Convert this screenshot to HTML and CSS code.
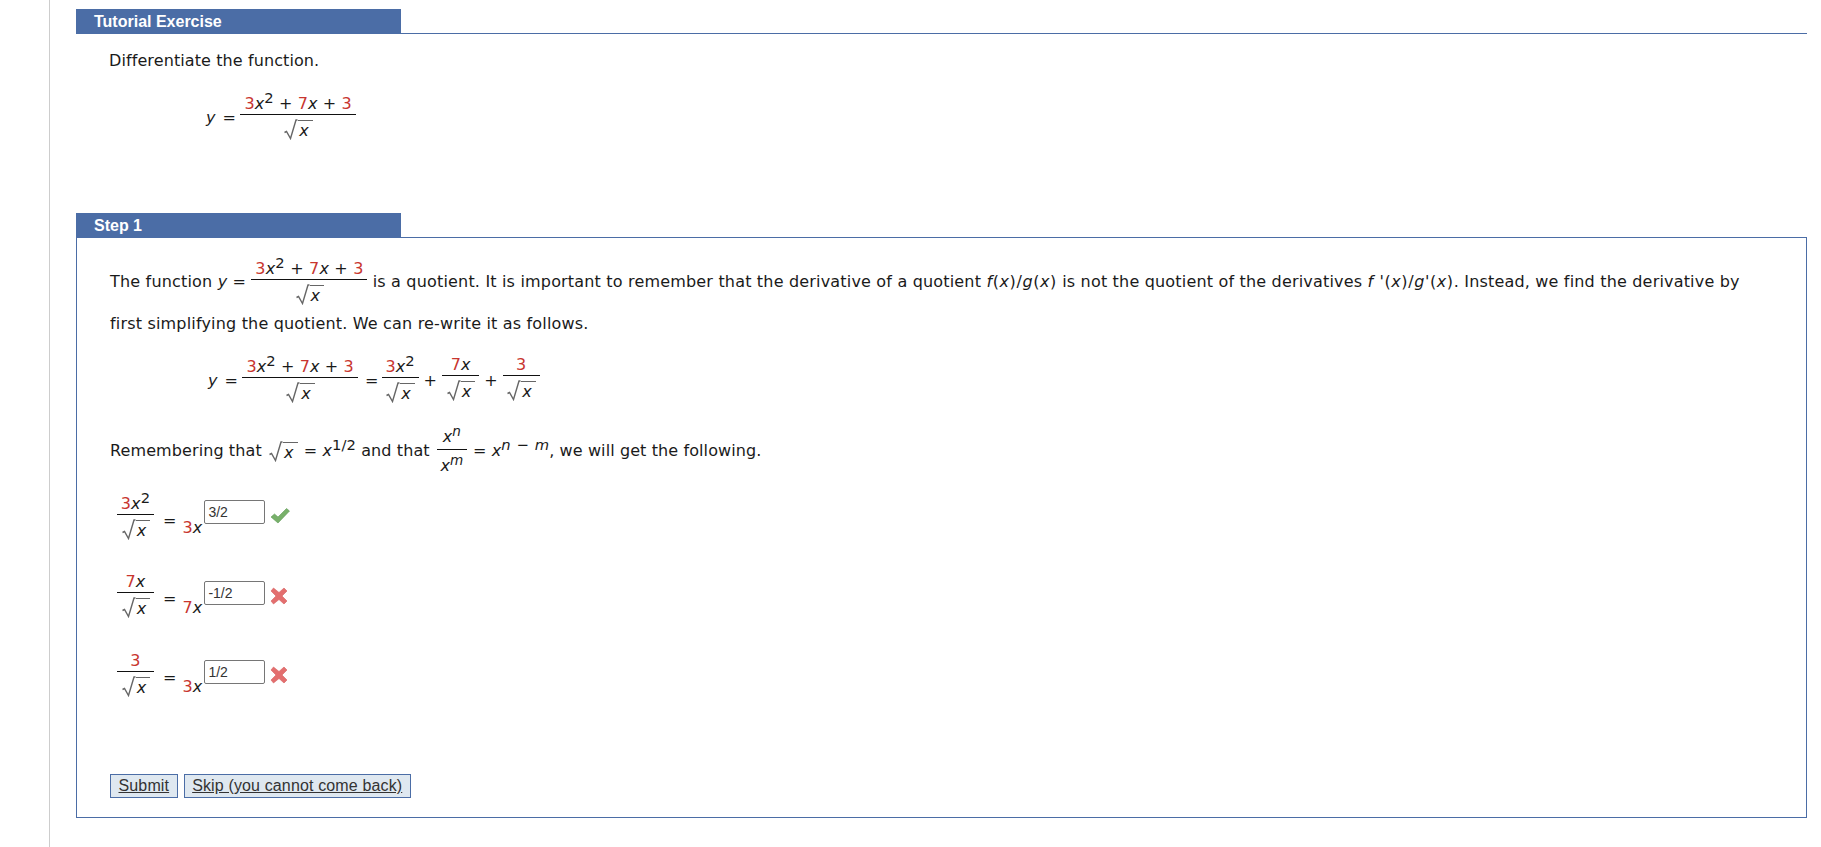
FILE: index.html
```html
<!DOCTYPE html>
<html lang="en">
<head>
<meta charset="utf-8">
<title>Tutorial Exercise</title>
<link rel="stylesheet" href="styles.css">
</head>
<body>
<div class="rail"></div>
<main class="main">
  <section class="intro">
    <div class="sec-head"><h2 class="sec-tab">Tutorial Exercise</h2></div>
    <p class="lead">Differentiate the function.</p>
    <div class="eq eq-intro">
      <i>y</i><span class="op lead-op">=</span>
      <span class="frac wide"><span class="num"><b>3</b><i>x</i><sup>2</sup> + <b>7</b><i>x</i> + <b>3</b></span><span class="den"><span class="sqrt"><svg class="rad" viewBox="0 0 14 21"><path d="M1 13.5 L3 12.5 L7 19.5 L12.5 1 H14"/></svg><i class="rx">x</i></span></span></span>
    </div>
  </section>
  <section class="step">
    <div class="sec-head"><h2 class="sec-tab">Step 1</h2></div>
    <div class="panel">
      <p class="para p1">The function <i>y</i> = <span class="frac wide"><span class="num"><b>3</b><i>x</i><sup>2</sup> + <b>7</b><i>x</i> + <b>3</b></span><span class="den"><span class="sqrt"><svg class="rad" viewBox="0 0 14 21"><path d="M1 13.5 L3 12.5 L7 19.5 L12.5 1 H14"/></svg><i class="rx">x</i></span></span></span> is a quotient. It is important to remember that the derivative of a quotient <span class="fn"><i>f</i>(<i>x</i>)/<i>g</i>(<i>x</i>)</span> is not the quotient of the derivatives <span class="fn"><i>f</i> '(<i>x</i>)/<i>g</i>'(<i>x</i>)</span>. Instead, we find the derivative by<span class="ln2">first simplifying the quotient. We can re-write it as follows.</span></p>
      <div class="eq eq-split">
        <i>y</i><span class="op lead-op">=</span>
        <span class="frac wide"><span class="num"><b>3</b><i>x</i><sup>2</sup> + <b>7</b><i>x</i> + <b>3</b></span><span class="den"><span class="sqrt"><svg class="rad" viewBox="0 0 14 21"><path d="M1 13.5 L3 12.5 L7 19.5 L12.5 1 H14"/></svg><i class="rx">x</i></span></span></span>
        <span class="op lead-op">=</span>
        <span class="frac small"><span class="num"><b>3</b><i>x</i><sup>2</sup></span><span class="den"><span class="sqrt"><svg class="rad" viewBox="0 0 14 21"><path d="M1 13.5 L3 12.5 L7 19.5 L12.5 1 H14"/></svg><i class="rx">x</i></span></span></span>
        <span class="op">+</span>
        <span class="frac small raised"><span class="num"><b>7</b><i>x</i></span><span class="den"><span class="sqrt"><svg class="rad" viewBox="0 0 14 21"><path d="M1 13.5 L3 12.5 L7 19.5 L12.5 1 H14"/></svg><i class="rx">x</i></span></span></span>
        <span class="op">+</span>
        <span class="frac small raised"><span class="num"><b>3</b></span><span class="den"><span class="sqrt"><svg class="rad" viewBox="0 0 14 21"><path d="M1 13.5 L3 12.5 L7 19.5 L12.5 1 H14"/></svg><i class="rx">x</i></span></span></span>
      </div>
      <p class="para p3">Remembering that <span class="sqrt"><svg class="rad" viewBox="0 0 14 21"><path d="M1 13.5 L3 12.5 L7 19.5 L12.5 1 H14"/></svg><i class="rx">x</i></span> = <i>x</i><sup>1/2</sup> and that <span class="frac pow"><span class="num"><i>x<sup>n</sup></i></span><span class="den"><i>x<sup>m</sup></i></span></span> = <i>x</i><sup class="nm"><i>n</i> &minus; <i>m</i></sup>, we will get the following.</p>
      <div class="row r1">
        <span class="frac small"><span class="num"><b>3</b><i>x</i><sup>2</sup></span><span class="den"><span class="sqrt"><svg class="rad" viewBox="0 0 14 21"><path d="M1 13.5 L3 12.5 L7 19.5 L12.5 1 H14"/></svg><i class="rx">x</i></span></span></span>
        <span class="eqs">=</span>
        <span class="base"><b>3</b><i>x</i></span>
        <input class="ans" type="text" value="3/2">
        <svg class="mark" viewBox="0 0 20 18"><path class="ok" d="M1 10 L4.5 7 L8 10 L16.5 1.5 L19.5 4 L8 16 Z"/></svg>
      </div>
      <div class="row r2">
        <span class="frac small"><span class="num"><b>7</b><i>x</i></span><span class="den"><span class="sqrt"><svg class="rad" viewBox="0 0 14 21"><path d="M1 13.5 L3 12.5 L7 19.5 L12.5 1 H14"/></svg><i class="rx">x</i></span></span></span>
        <span class="eqs">=</span>
        <span class="base"><b>7</b><i>x</i></span>
        <input class="ans" type="text" value="-1/2">
        <svg class="mark" viewBox="0 0 20 18"><path class="no" d="M3.5 1 L9 5.5 L14 1 L17 4 L12 9 L17 14 L14 17 L9 12.5 L3.5 17 L1 14 L6 9 L1 4 Z"/></svg>
      </div>
      <div class="row r3">
        <span class="frac small"><span class="num"><b>3</b></span><span class="den"><span class="sqrt"><svg class="rad" viewBox="0 0 14 21"><path d="M1 13.5 L3 12.5 L7 19.5 L12.5 1 H14"/></svg><i class="rx">x</i></span></span></span>
        <span class="eqs">=</span>
        <span class="base"><b>3</b><i>x</i></span>
        <input class="ans" type="text" value="1/2">
        <svg class="mark" viewBox="0 0 20 18"><path class="no" d="M3.5 1 L9 5.5 L14 1 L17 4 L12 9 L17 14 L14 17 L9 12.5 L3.5 17 L1 14 L6 9 L1 4 Z"/></svg>
      </div>
      <div class="actions">
        <button class="btn" type="button">Submit</button>
        <button class="btn" type="button">Skip (you cannot come back)</button>
      </div>
    </div>
  </section>
</main>
</body>
</html>
```
FILE: styles.css
```css
* { box-sizing: border-box; }
html, body { margin: 0; height: 100%; background: #fff; }
body {
  display: flex;
  font-family: "DejaVu Sans", Verdana, sans-serif;
  font-size: 16px;
  letter-spacing: .1px;
  color: #1a1a1a;
  overflow: hidden;
}
.rail { width: 50px; flex: none; border-right: 1px solid #cdcdcd; }
.main { flex: none; width: 1731px; margin-left: 26px; padding-top: 9px; }
.sec-head { border-bottom: 1px solid #4b6da6; height: 25px; }
.sec-tab {
  margin: 0;
  width: 325px;
  height: 25px;
  padding-left: 18px;
  background: #4b6da6;
  color: #fff;
  letter-spacing: 0;
  font: bold 16px/26px "Liberation Sans", Arial, sans-serif;
}
.intro { height: 204px; }
.lead { margin: 0; padding: 17px 0 0 33px; line-height: 20px; }
.eq { display: flex; align-items: center; }
.eq-intro { padding: 23px 0 0 130px; }
.op { margin: 0 6px; }
.op.lead-op { margin: 0 4px 0 7px; }
i { font-style: italic; }
b { font-weight: normal; color: #c8352f; }
sup { font-size: .92em; line-height: 0; vertical-align: 6.5px; }
.nm { word-spacing: 1px; }

.frac { display: inline-flex; flex-direction: column; align-items: center; vertical-align: middle; }
.num { line-height: 20px; padding: 0 3px; white-space: nowrap; }
.den { border-top: 1px solid #111; width: 100%; display: flex; justify-content: center; line-height: 20px; padding-top: 4px; }
.frac.wide { width: 116px; }
.frac.small { width: 37px; }
.frac.pow { width: 30px; margin: 0 1px 0 2px; }
.frac.pow .num { padding-bottom: 2px; }
.frac.pow .den { padding-top: 6px; }
.frac.pow sup { font-size: .85em; }
.sqrt { display: inline-flex; align-items: flex-start; vertical-align: middle; height: 21px; }
.rad { width: 15px; height: 21px; flex: none; }
.rad path { fill: none; stroke: #666; stroke-width: 1.4; }
.rx { border-top: 1px solid #666; line-height: 19px; height: 20px; margin-top: 1px; padding: 0 4px 0 1px; }
.p3 .sqrt { margin: 0 1px; }

.panel {
  height: 580px;
  border: 1px solid #4b6da6;
  border-top: 0;
  padding: 0 0 0 33px;
}
.para { margin: 0; white-space: nowrap; line-height: 24px; }
.p1 { padding-top: 21px; letter-spacing: .18px; }
.fn { letter-spacing: .6px; }
.ln2 { display: block; margin-top: 7px; }
.eq-split { padding: 21px 0 0 98px; }
.eq-split .frac.small { margin: 0 -1px; }
.eq-split .frac.raised { margin-top: -4px; }
.p3 { padding-top: 24px; }

.row { display: flex; align-items: center; height: 60px; padding-left: 7px; }
.r1 { margin-top: 11px; }
.r2 { margin-top: 18px; }
.r3 { margin-top: 19px; }
.eqs { margin: 6px 6px 0 9px; }
.base { align-self: flex-end; margin-bottom: 9px; line-height: 20px; margin-right: 2px; }
.r2 .base, .r3 .base { margin-bottom: 7px; }
.ans {
  width: 61px;
  height: 24px;
  margin: -10px 0 0 0;
  padding: 0 3px;
  border: 1px solid #767676;
  border-radius: 2px;
  font: 14px "Liberation Sans", Arial, sans-serif;
  color: #333;
  background: #fff;
}
.r2 .ans, .r3 .ans { margin-top: -4px; }
.mark { width: 20px; height: 18px; margin: -2px 0 0 5px; filter: blur(.35px); }
.r2 .mark, .r3 .mark { margin-top: 1px; }
.ok { fill: #78b06a; stroke: #5e9a56; stroke-width: .6; }
.no { fill: #e36f6f; stroke: #d65f5f; stroke-width: .6; }

.actions { display: flex; gap: 6px; margin-top: 70px; }
.btn {
  height: 24px;
  padding: 0 7.5px;
  border: 1px solid #4b6da6;
  background: #dfe8f0;
  color: #333;
  font: 16px "Liberation Sans", Arial, sans-serif;
  letter-spacing: .14px;
  text-decoration: underline;
}
```
